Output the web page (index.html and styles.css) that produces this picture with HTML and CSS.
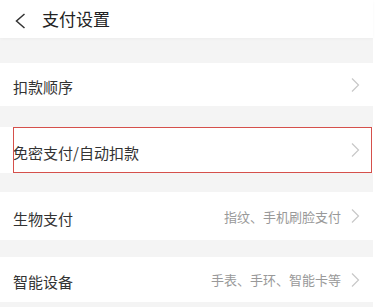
FILE: index.html
```html
<!DOCTYPE html>
<html lang="zh">
<head>
<meta charset="utf-8">
<link rel="stylesheet" href="styles.css">
</head>
<body>
<div class="page">
  <header class="header">
    <svg class="back" width="12" height="16" viewBox="0 0 12 16"><path d="M10.5 1 L2.5 8 L10.5 15" fill="none" stroke="#333" stroke-width="1.5"/></svg>
    <span class="title">支付设置</span>
  </header>
  <div class="list">
    <div class="row r1"><span class="label">扣款顺序</span><span class="right"><svg class="chev" width="9" height="16" viewBox="0 0 9 16"><path d="M1 1.5 L7.5 8 L1 14.5" fill="none" stroke="#c8c8c8" stroke-width="1.2"/></svg></span></div>
    <div class="row r2"><span class="label">免密支付/自动扣款</span><span class="right"><svg class="chev" width="9" height="16" viewBox="0 0 9 16"><path d="M1 1.5 L7.5 8 L1 14.5" fill="none" stroke="#c8c8c8" stroke-width="1.2"/></svg></span><div class="mark"></div></div>
    <div class="row r3"><span class="label">生物支付</span><span class="right"><span class="value">指纹、手机刷脸支付</span><svg class="chev" width="9" height="16" viewBox="0 0 9 16"><path d="M1 1.5 L7.5 8 L1 14.5" fill="none" stroke="#c8c8c8" stroke-width="1.2"/></svg></span></div>
    <div class="row r4"><span class="label">智能设备</span><span class="right"><span class="value">手表、手环、智能卡等</span><svg class="chev" width="9" height="16" viewBox="0 0 9 16"><path d="M1 1.5 L7.5 8 L1 14.5" fill="none" stroke="#c8c8c8" stroke-width="1.2"/></svg></span></div>
  </div>
</div>
</body>
</html>
```
FILE: styles.css
```css
html, body {
  margin: 0;
  padding: 0;
  background: #ffffff;
}
body {
  font-family: "Noto Sans CJK SC", "Noto Sans", sans-serif;
  color: #333;
  height: 307px;
  overflow: hidden;
}
.page {
  width: 373px;
  height: 307px;
  background: #f4f4f4;
}
.header {
  height: 38px;
  background: #fff;
  display: flex;
  align-items: center;
  padding-left: 14px;
  box-shadow: 0 1px 3px rgba(0,0,0,0.03);
}
.back {
  display: block;
  margin-top: 3px;
}
.title {
  margin-left: 16px;
  font-size: 17px;
  line-height: 20px;
  color: #222;
}
.list {
  display: flex;
  flex-direction: column;
  padding-top: 25px;
}
.row {
  position: relative;
  background: #fff;
  display: flex;
  align-items: center;
  justify-content: space-between;
  padding: 0 13px 0 13px;
}
.r1 { height: 43px; }
.r2 { height: 46px; margin-top: 21px; }
.r3 { height: 48px; margin-top: 19px; }
.r4 { height: 45px; margin-top: 17px; }
.label {
  font-size: 15px;
  color: #333;
  margin-top: 4px;
}
.right {
  display: flex;
  align-items: center;
}
.value {
  font-size: 13px;
  color: #999;
  margin-right: 10px;
}
.chev {
  display: block;
}
.mark {
  position: absolute;
  left: 13px;
  right: 1px;
  top: 0;
  bottom: 0;
  border: 1.5px solid #d5504b;
}
```
